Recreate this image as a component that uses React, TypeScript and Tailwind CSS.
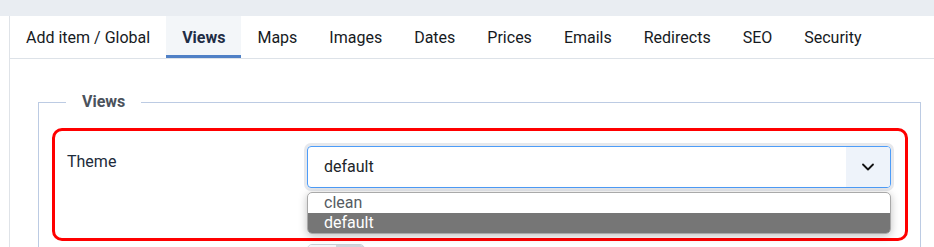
import { ChevronDown } from "lucide-react";

const tabs = ["Add item / Global", "Views", "Maps", "Images", "Dates", "Prices", "Emails", "Redirects", "SEO", "Security"];

export default function App() {
  return (
    <div className="w-[934px] h-[247px] overflow-hidden bg-white font-['Roboto',sans-serif] text-[16px]">
      <div className="h-[16px] bg-[#e9edf2]" />
      <div className="ml-[9px] border-l border-[#dfe3e8] h-[231px]">
        <nav className="flex h-[43px] border-b border-[#dde2e8]">
          {tabs.map((t) =>
            t === "Views" ? (
              <div key={t} className="px-4 flex items-center bg-[#f3f6f9] border-b-[3px] border-[#4f80c6] pt-[4px] font-bold text-[#1f2d45]">
                {t}
              </div>
            ) : (
              <div key={t} className="px-4 flex items-center pt-[2px] text-[#161a1e]">
                {t}
              </div>
            )
          )}
        </nav>
        <div className="pl-[28px] pt-[31px] w-[911px]">
          <fieldset className="border border-[#bccbe3] pl-[13px] pr-[12px] pt-[14px] pb-0">
            <legend className="ml-[14px] px-4 font-bold text-[#4b525c] leading-[24px]">Views</legend>
            <div className="border-[3px] border-[#ff0000] rounded-[10px] pl-[12px] pr-[14px] pt-[15px] pb-[4px] flex">
              <label className="w-[240px] pt-[4px] leading-[24px] text-[#1d2b3b]">Theme</label>
              <div className="flex-1">
                <div className="h-[42px] flex border border-[#4d9cf8] rounded-[4px] shadow-[0_0_0_3px_rgba(200,205,212,0.45)] overflow-hidden">
                  <div className="flex-1 flex items-center pl-4 text-[#212529]">default</div>
                  <div className="w-[44px] flex items-center justify-center bg-[#eef3fa]">
                    <ChevronDown size={20} strokeWidth={2.2} className="text-[#111]" />
                  </div>
                </div>
                <div className="mt-[4px] border border-[#a9a9a9] rounded-[5px] overflow-hidden shadow-[0_2px_8px_rgba(0,0,0,0.25)] leading-[20px]">
                  <div className="pl-4 text-[#555b62]">clean</div>
                  <div className="pl-4 bg-[#767676] text-white">default</div>
                </div>
              </div>
            </div>
            <div className="ml-[255px] mt-[3px] w-[58px] h-[20px] flex rounded-[5px] border border-[#c9ced6] overflow-hidden">
              <div className="w-[28px] bg-[#f4f6f9]" />
              <div className="flex-1 bg-[#cfd4db]" />
            </div>
          </fieldset>
        </div>
      </div>
    </div>
  );
}
